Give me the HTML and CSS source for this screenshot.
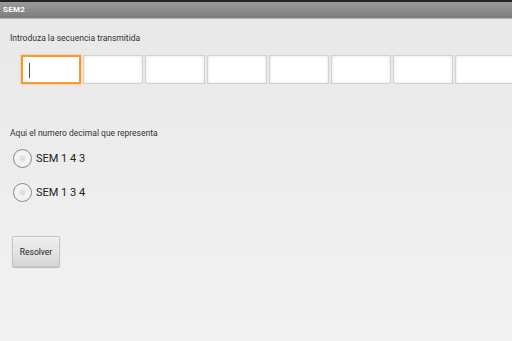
FILE: index.html
```html
<html>
<head>
  <title>SEM2</title>
  <link rel="stylesheet" href="styles.css">
</head>
<body>
  <div class="titlebar">SEM2</div>
  <div class="content">
    <p class="label">Introduza la secuencia transmitida</p>
    <div class="digits">
      <div class="digit focused"><span class="caret"></span></div>
      <div class="digit"></div>
      <div class="digit"></div>
      <div class="digit"></div>
      <div class="digit"></div>
      <div class="digit"></div>
      <div class="digit"></div>
      <div class="digit"></div>
    </div>
    <p class="label question">Aqui el numero decimal que representa</p>
    <div class="options">
      <div class="option"><span class="radio"></span>SEM 1 4 3</div>
      <div class="option"><span class="radio"></span>SEM 1 3 4</div>
    </div>
    <button class="solve">Resolver</button>
  </div>
</body>
</html>
```

FILE: styles.css
```css
* {
  margin: 0;
  box-sizing: border-box;
  font-family: Roboto, "Liberation Sans", sans-serif;
}

body {
  width: 512px;
  height: 341px;
  overflow: hidden;
  background: linear-gradient(#e8e8e8, #f2f2f2);
}

.titlebar {
  height: 19px;
  border-top: 2px solid #222;
  border-bottom: 1px solid #b5b5b5;
  background: linear-gradient(#9a9a9a, #7c7c7c);
  color: #fff;
  font-size: 8px;
  font-weight: bold;
  letter-spacing: 0.3px;
  padding: 3px 0 0 3px;
}

.content {
  padding: 13px 0 0 10px;
}

.label {
  font-size: 8.5px;
  color: #333;
  line-height: 12px;
}

.digits {
  display: flex;
  gap: 2px;
  margin: 11px 0 0 11px;
  white-space: nowrap;
}

.digit {
  flex: none;
  width: 60px;
  height: 29px;
  background: #fff;
  border: 1px solid #d2d2d2;
  box-shadow: inset 0 0 3px #ddd;
  padding: 7px 0 0 7px;
}

.digit.focused {
  border: 2px solid #f59a30;
  box-shadow: 0 0 2px #f8b060;
  padding: 6px 0 0 6px;
}

.caret {
  display: block;
  width: 1px;
  height: 15px;
  background: #555;
}

.question {
  margin-top: 43px;
}

.options {
  margin-top: 10px;
  display: flex;
  flex-direction: column;
  gap: 15px;
}

.option {
  display: flex;
  align-items: center;
  font-size: 11px;
  color: #222;
  height: 19px;
}

.radio {
  width: 19px;
  height: 19px;
  border-radius: 50%;
  border: 1px solid #8a8a8a;
  background: radial-gradient(circle, #d8d8d8 0, #e6e6e6 3px, #f4f4f4 4px, #f0f0f0 100%);
  margin: 0 4px 0 3px;
}

.solve {
  margin: 34px 0 0 2px;
  width: 48px;
  height: 31px;
  border: 1px solid #c4c4c4;
  border-radius: 2px;
  background: linear-gradient(#f0f0f0, #d6d6d6);
  box-shadow: 0 1px 1px #bbb;
  font-size: 8.5px;
  color: #222;
}
```
